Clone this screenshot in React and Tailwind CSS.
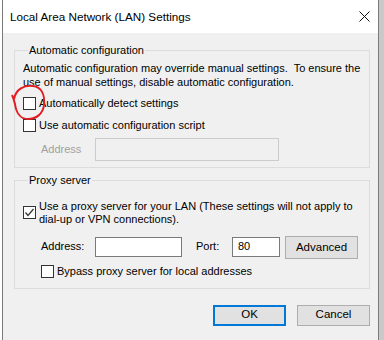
import React from "react";

const font = { fontFamily: '"Liberation Sans", Arial, sans-serif' };

function Check({ checked }) {
  return (
    <span className="w-[13px] h-[13px] border border-[#333] bg-white flex items-center justify-center shrink-0">
      {checked && (
        <svg width="11" height="11" viewBox="0 0 11 11">
          <path d="M1.5 5.5 L4 8.5 L9.5 2" fill="none" stroke="#333" strokeWidth="1.2" />
        </svg>
      )}
    </span>
  );
}

function Button({ children, primary, className = "" }) {
  return (
    <button
      className={`bg-[#e1e1e1] text-[11.5px] text-black flex items-center justify-center ${
        primary ? "border-2 border-[#0078d7]" : "border border-[#adadad]"
      } ${className}`}
    >
      {children}
    </button>
  );
}

export default function App() {
  return (
    <div className="w-[384px] h-[340px] bg-white flex relative overflow-hidden text-black" style={font}>
      <div className="w-[2px]" />

      {/* window */}
      <div className="w-[377px] h-full border-x border-[#7a7a7a] flex flex-col bg-[#f0f0f0]">
        {/* title bar */}
        <div className="h-[33px] bg-white flex items-center justify-between pl-[7px] pr-[8px] shrink-0">
          <span className="text-[11.7px]">Local Area Network (LAN) Settings</span>
          <svg width="11" height="11" viewBox="0 0 11 11">
            <path d="M0.5 0.5 L10.5 10.5 M10.5 0.5 L0.5 10.5" stroke="#111" strokeWidth="1" />
          </svg>
        </div>

        <div className="flex flex-col text-[11px]">
          {/* Automatic configuration */}
          <fieldset className="ml-[11px] mr-[8px] mt-[9px] border border-[#dcdcdc] pl-[8px] pr-[6px] pb-[6px]">
            <legend className="px-[1px] ml-[5px] leading-[16px]">Automatic configuration</legend>
            <p className="leading-[14px] mt-[3px] whitespace-pre">
              {"Automatic configuration may override manual settings.  To ensure the\nuse of manual settings, disable automatic configuration."}
            </p>
            <div className="flex items-center gap-[3px] h-[16px] mt-[6px]">
              <Check />
              <span>Automatically detect settings</span>
            </div>
            <div className="flex items-center gap-[3px] h-[16px] mt-[6px]">
              <Check />
              <span>Use automatic configuration script</span>
            </div>
            <div className="flex items-center mt-[5px] pl-[18px]">
              <span className="w-[54px] text-[#a0a0a0]">Address</span>
              <div className="w-[184px] h-[23px] border border-[#cccccc] bg-[#f0f0f0]" />
            </div>
          </fieldset>

          {/* Proxy server */}
          <fieldset className="ml-[11px] mr-[8px] mt-[4px] border border-[#dcdcdc] pl-[8px] pr-[6px] pb-[8px]">
            <legend className="px-[1px] ml-[5px] leading-[16px]">Proxy server</legend>
            <div className="flex gap-[3px] mt-[12px]">
              <div className="pt-[6px]">
                <Check checked />
              </div>
              <p className="leading-[13px]">
                Use a proxy server for your LAN (These settings will not apply to
                <br />
                dial-up or VPN connections).
              </p>
            </div>
            <div className="flex items-center mt-[8px] pl-[18px]">
              <span className="w-[54px]">Address:</span>
              <div className="w-[87px] h-[20px] border border-[#7a7a7a] bg-white" />
              <span className="ml-[14px] w-[36px]">Port:</span>
              <div className="w-[48px] h-[20px] border border-[#7a7a7a] bg-white pl-[5px] flex items-center">80</div>
              <Button className="ml-[5px] w-[73px] h-[23px] mt-[2px]">Advanced</Button>
            </div>
            <div className="flex items-center gap-[3px] mt-[4px] pl-[18px]">
              <Check />
              <span>Bypass proxy server for local addresses</span>
            </div>
          </fieldset>

          {/* buttons */}
          <div className="flex justify-end gap-[11px] mr-[8px] mt-[16px]">
            <Button primary className="w-[73px] h-[21px]">OK</Button>
            <Button className="w-[73px] h-[21px]">Cancel</Button>
          </div>
        </div>
      </div>

      <div className="flex-1 bg-[#c9c9c9]" />

      {/* hand-drawn red circle annotation */}
      <svg className="absolute left-0 top-0 pointer-events-none" width="384" height="340">
        <path
          d="M14 99 C 16 89, 24 85, 33 86 C 41 87, 45 94, 44 105 C 43 114, 36 119, 28 119 C 20 119, 16 112, 15 104 C 14 100, 13 97, 12 95"
          fill="none"
          stroke="#e31b23"
          strokeWidth="2"
        />
      </svg>
    </div>
  );
}
